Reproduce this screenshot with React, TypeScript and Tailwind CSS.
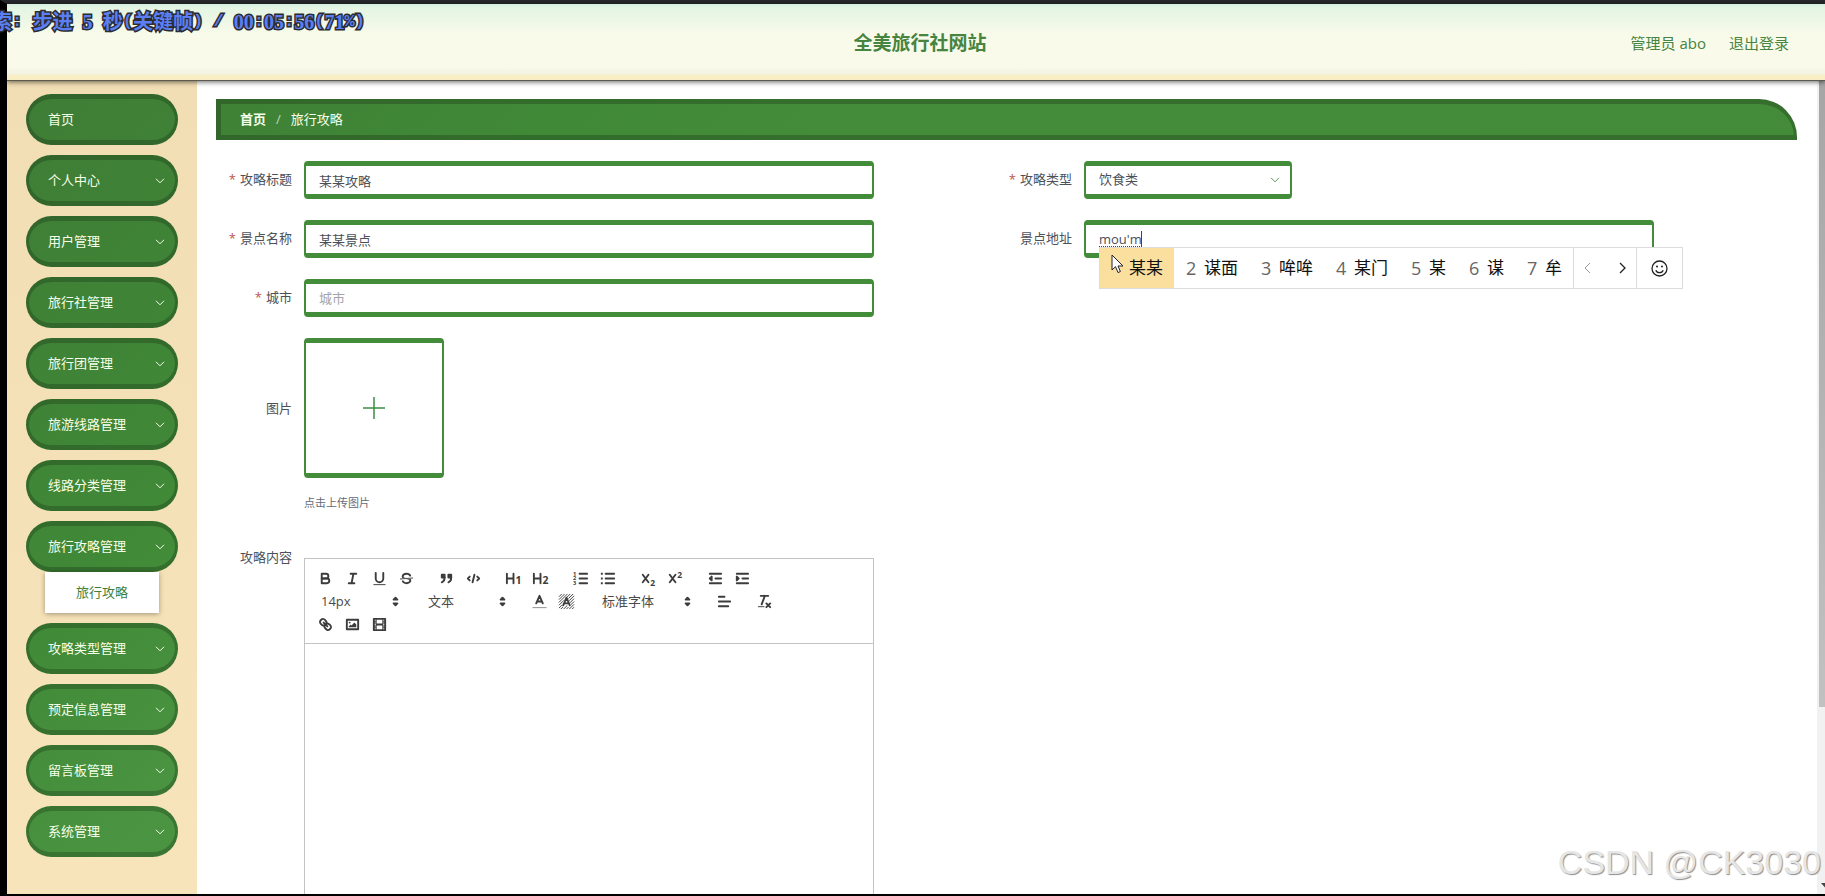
import type { ReactNode } from 'react';

const menus = [
    { name: '首页' },
    { name: '个人中心', sub: true },
    { name: '用户管理', sub: true },
    { name: '旅行社管理', sub: true },
    { name: '旅行团管理', sub: true },
    { name: '旅游线路管理', sub: true },
    { name: '线路分类管理', sub: true },
    { name: '旅行攻略管理', sub: true, open: '旅行攻略' },
    { name: '攻略类型管理', sub: true },
    { name: '预定信息管理', sub: true },
    { name: '留言板管理', sub: true },
    { name: '系统管理', sub: true },
];

const words = ['某某', '谋面', '哞哞', '某门', '某', '谋', '牟'];

const inputStyle =
    'block h-[38px] w-full rounded border-x-2 border-y-[5px] border-[#438d3a] bg-white px-[13px] text-[13px] text-[#4b4f57] outline-none placeholder:text-[#a3a5ab]';

const Arrow = ({ className }: { className?: string }) => (
    <svg className={className} width="10" height="6" viewBox="0 0 10 6" fill="none" stroke="currentColor">
        <path d="M1 .8 5 4.8 9 .8" />
    </svg>
);

const Field = ({ id, label, required, children }: { id: string; label: string; required?: boolean; children: ReactNode }) => (
    <div className="flex">
        <label htmlFor={id} className="mr-3 w-[76px] flex-none text-right text-[13px] leading-9 text-[#4d5157]">
            {required && <span className="mr-1 text-[#b9544f]">*</span>}
            {label}
        </label>
        <div className="relative w-full max-w-[570px]">{children}</div>
    </div>
);

const Icon = ({ label, children }: { label: string; children: ReactNode }) => (
    <button type="button" aria-label={label} className="flex h-[23px] w-[27px] items-center justify-center">
        <svg width="17" height="17" viewBox="0 0 18 18" fill="none" stroke="#3c3c3c" strokeWidth="2" strokeLinecap="round" strokeLinejoin="round">
            {children}
        </svg>
    </button>
);

const Digit = ({ x, y, size, children }: { x: number; y: number; size: number; children: string }) => (
    <text x={x} y={y} fontSize={size} fontWeight="700" fontFamily="Open Sans, sans-serif" fill="#3c3c3c" stroke="none">
        {children}
    </text>
);

const Picker = ({ label, value, wide }: { label: string; value: string; wide?: boolean }) => (
    <div className={wide ? 'relative w-[105px]' : 'relative w-[94px]'}>
        <select aria-label={label} className="block h-[23px] w-full appearance-none bg-transparent pl-[9px] text-[13px] text-[#4a4a4a] outline-none">
            <option>{value}</option>
        </select>
        <svg className="pointer-events-none absolute top-[3px] right-0.5" width="17" height="17" viewBox="0 0 18 18" fill="#3c3c3c" stroke="#3c3c3c" strokeWidth="2" strokeLinejoin="round">
            <path d="M7 11 9 13 11 11ZM7 7 9 5 11 7Z" />
        </svg>
    </div>
);

const Group = ({ children }: { children: ReactNode }) => <div className="flex">{children}</div>;

const Toolbar = () => (
    <div className="border-b border-[#c3c3c3] px-[7px] pt-2 pb-[7px]">
        <div className="flex gap-[13px]">
            <Group>
                <Icon label="加粗">
                    <path d="M5 4H9.5A2.5 2.5 0 0 1 9.5 9H5Z" />
                    <path d="M5 9H10.5A2.5 2.5 0 0 1 10.5 14H5Z" />
                </Icon>
                <Icon label="斜体"><path d="M7 4H13M5 14H11M8 14 10 4" /></Icon>
                <Icon label="下划线">
                    <path d="M5 3V9a4 4 0 0 0 8 0V3" />
                    <path d="M3 15.5H15" strokeWidth="1" />
                </Icon>
                <Icon label="删除线">
                    <path d="M15.5 8.5 2.5 9.5" strokeWidth="1" />
                    <path fill="#3c3c3c" stroke="none" d="M9.007,8C6.542,7.791,6,7.519,6,6.5,6,5.792,7.283,5,9,5c1.571,0,2.765.679,2.969,1.309a1,1,0,0,0,1.9-.617C13.356,4.106,11.354,3,9,3,6.2,3,4,4.538,4,6.5a3.2,3.2,0,0,0,.5,1.843Z" />
                    <path fill="#3c3c3c" stroke="none" d="M8.984,10C11.457,10.208,12,10.479,12,11.5c0,.708-1.283,1.5-3,1.5-1.571,0-2.765-.679-2.969-1.309a1,1,0,1,0-1.9.617C4.644,13.894,6.646,15,9,15c2.8,0,5-1.538,5-3.5a3.2,3.2,0,0,0-.5-1.843Z" />
                </Icon>
            </Group>
            <Group>
                <Icon label="引用">
                    <path fill="#3c3c3c" d="M4 5H7V8H4ZM11 5H14V8H11Z" />
                    <path d="M7 8c0 4-3 5-3 5M14 8c0 4-3 5-3 5" />
                </Icon>
                <Icon label="代码"><path d="M5 7 3 9 5 11M13 7 15 9 13 11M10 5 8 13" /></Icon>
            </Group>
            <Group>
                <Icon label="标题一">
                    <path d="M2 4V14M9 4V14M2 9H9" />
                    <Digit x={11} y={15} size={11}>1</Digit>
                </Icon>
                <Icon label="标题二">
                    <path d="M2 4V14M9 4V14M2 9H9" />
                    <Digit x={11} y={15} size={11}>2</Digit>
                </Icon>
            </Group>
            <Group>
                <Icon label="有序列表">
                    <path d="M8 4H16M8 9H16M8 14H16" />
                    <Digit x={1} y={6} size={6}>1</Digit>
                    <Digit x={1} y={11} size={6}>2</Digit>
                    <Digit x={1} y={16} size={6}>3</Digit>
                </Icon>
                <Icon label="无序列表">
                    <path d="M7 4H16M7 9H16M7 14H16" />
                    <path fill="#3c3c3c" stroke="none" d="M2 3H4V5H2ZM2 8H4V10H2ZM2 13H4V15H2Z" />
                </Icon>
            </Group>
            <Group>
                <Icon label="下标">
                    <path d="M4 5 10 13M10 5 4 13" />
                    <Digit x={12} y={17} size={9}>2</Digit>
                </Icon>
                <Icon label="上标">
                    <path d="M4 5 10 13M10 5 4 13" />
                    <Digit x={12} y={8} size={9}>2</Digit>
                </Icon>
            </Group>
            <Group>
                <Icon label="减少缩进">
                    <path d="M4 14H16M4 4H16M10 9H16" />
                    <path fill="#3c3c3c" d="M6 7V11L4 9Z" />
                </Icon>
                <Icon label="增加缩进">
                    <path d="M4 14H16M4 4H16M10 9H16" />
                    <path fill="#3c3c3c" d="M4 7V11L6 9Z" />
                </Icon>
            </Group>
        </div>
        <div className="flex gap-[13px]">
            <Picker label="字号" value="14px" />
            <Picker label="标题" value="文本" />
            <Group>
                <Icon label="文字颜色">
                    <path d="M5.5 11 9 3 12.5 11M11.6 9H6.4" />
                    <path d="M2 15.5H16" stroke="#8a8a8a" strokeWidth="1" />
                </Icon>
                <Icon label="背景颜色">
                    <path strokeWidth="1" strokeLinecap="butt" d="M1 4 4 1M1 7 7 1M1 10 10 1M1 13 13 1M1 16 16 1M3 17 17 3M6 17 17 6M9 17 17 9M12 17 17 12M15 17 17 15" />
                    <path stroke="#fff" strokeWidth="4" d="M6 13 9 6 12 13" />
                    <path d="M5.5 13 9 5 12.5 13M11.6 11H6.4" />
                </Icon>
            </Group>
            <Picker label="字体" value="标准字体" wide />
            <Icon label="对齐"><path d="M3 9H15M3 14H13M3 4H9" /></Icon>
            <Icon label="清除格式">
                <path d="M5 3H13M6 12 9.35 3M11 11 15 15M15 11 11 15" />
                <path d="M2.5 14.5H8.5" strokeWidth="1" />
            </Icon>
        </div>
        <div className="flex">
            <Icon label="链接">
                <path d="M7 7 11 11" />
                <path d="M8.9,4.577a3.476,3.476,0,0,1,.36,4.679A3.476,3.476,0,0,1,4.577,8.9C3.185,7.5,2.035,6.4,4.217,4.217S7.5,3.185,8.9,4.577Z" />
                <path d="M13.423,9.1a3.476,3.476,0,0,0-4.679-.36,3.476,3.476,0,0,0,.36,4.679c1.392,1.392,2.5,2.542,4.679.36S14.815,10.5,13.423,9.1Z" />
            </Icon>
            <Icon label="图片">
                <path d="M3 4H15V14H3Z" />
                <circle cx="6" cy="7" r="1" fill="#3c3c3c" stroke="none" />
                <path fill="#3c3c3c" stroke="none" d="M5 12V11L7 9 8 10 11 7 13 9V12Z" />
            </Icon>
            <Icon label="视频">
                <path d="M3 3H15V15H3Z" />
                <path fill="#3c3c3c" stroke="none" d="M5 3H6V15H5ZM12 3H13V15H12ZM5 8H13V10H5ZM3 5H6V6H3ZM3 7H6V8H3ZM3 10H6V11H3ZM3 12H6V13H3ZM12 5H15V6H12ZM12 7H15V8H12ZM12 10H15V11H12ZM12 12H15V13H12Z" />
            </Icon>
        </div>
    </div>
);

const Header = () => (
    <header className="relative z-10 grid h-[77px] flex-none grid-cols-[1fr_auto_1fr] items-center border-b border-[#5d5a50] bg-[linear-gradient(180deg,#d3f0df_0px,#e4f5e4_3px,#eaf6e4_12px,#f8faea_30px,#fafae9_62px,#f3f3e4_70px,#f9efc6_71px,#f7ecc2_76px)] pt-0.5 pr-9 pl-11 text-[#46843f] shadow-[0_1px_5px_rgba(0,0,0,0.6)]">
        <div />
        <h1 className="text-[19px] font-bold">全美旅行社网站</h1>
        <div className="flex justify-end gap-[23px] text-[15px]">
            <span>管理员 abo</span>
            <a href="#logout">退出登录</a>
        </div>
    </header>
);

const Sidebar = () => (
    <aside className="w-[190px] flex-none bg-linear-to-b from-[#f2deb4] to-[#f8e4ba] px-[19px] pt-[13px]">
        <nav>
            {menus.map((item) => (
                <div key={item.name} className="mb-2.5">
                    <button
                        type="button"
                        className="flex h-[51px] w-full items-center justify-between rounded-[26px] border-x-[3px] border-y-[5px] border-black/20 bg-[linear-gradient(135deg,#3e7a35_0%,#408937_24%,#4b9442_36%,#418c38_50%,#479040_100%)] bg-fixed pr-2.5 pl-[19px] text-[13px] text-[#f6ffe9]"
                    >
                        {item.name}
                        {item.sub && <Arrow />}
                    </button>
                    {item.open && (
                        <a href="#guide" className="mx-[19px] block h-[41px] bg-white text-center text-[13px] leading-[41px] text-[#3f8038] shadow-[0_1px_5px_rgba(0,0,0,0.35)]">
                            {item.open}
                        </a>
                    )}
                </div>
            ))}
        </nav>
    </aside>
);

const Candidates = () => (
    <div className="absolute top-[27px] left-[15px] z-20 flex h-[42px] border border-[#dcdcdc] bg-white text-[17px] whitespace-nowrap text-[#111]">
        {words.map((word, i) => (
            <div key={word} className={i === 0 ? 'flex items-center bg-[#fadf9f] px-[11px]' : 'flex items-center pr-[11px] pl-3'}>
                <span className="w-[18px] text-[18px] text-[#666]">
                    {i === 0 ? (
                        <svg className="mb-2" width="13" height="20" viewBox="0 0 13 20" fill="#fff" stroke="#222">
                            <path d="M1 1V16L4.5 12.7 7 18.6 9.4 17.5 7 12H12Z" />
                        </svg>
                    ) : (
                        i + 1
                    )}
                </span>
                {word}
            </div>
        ))}
        <div className="flex border-l border-[#dcdcdc]">
            <button type="button" aria-label="上一页" className="flex w-[31px] items-center justify-center pr-1 text-[#999]">
                <svg width="7" height="12" viewBox="0 0 7 12" fill="none" stroke="currentColor"><path d="M6 1 1 6 6 11" /></svg>
            </button>
            <button type="button" aria-label="下一页" className="flex w-[31px] items-center justify-center pl-1 text-[#222]">
                <svg width="7" height="12" viewBox="0 0 7 12" fill="none" stroke="currentColor" strokeWidth="1.3"><path d="M1 1 6 6 1 11" /></svg>
            </button>
        </div>
        <button type="button" aria-label="表情" className="flex w-[46px] items-center justify-center border-l border-[#dcdcdc]">
            <svg width="17" height="17" viewBox="0 0 17 17" fill="none" stroke="#222" strokeWidth="1.3">
                <circle cx="8.5" cy="8.5" r="7.5" />
                <path d="M4.8 10.2a4 4 0 0 0 7.4 0" />
                <circle cx="6" cy="6.5" r="1" fill="#222" stroke="none" />
                <circle cx="11" cy="6.5" r="1" fill="#222" stroke="none" />
            </svg>
        </button>
    </div>
);

const GuideForm = () => (
    <form className="flex min-h-0 flex-1 flex-col">
        <div className="mt-[21px] grid grid-cols-2 gap-y-[21px] pr-[21px]">
            <Field id="title" label="攻略标题" required>
                <input id="title" className={inputStyle} defaultValue="某某攻略" />
            </Field>
            <Field id="type" label="攻略类型" required>
                <div className="relative w-[208px]">
                    <select id="type" className={`${inputStyle} appearance-none`}>
                        <option>饮食类</option>
                    </select>
                    <Arrow className="pointer-events-none absolute top-4 right-3 text-[#5b9a60]" />
                </div>
            </Field>
            <Field id="spot" label="景点名称" required>
                <input id="spot" className={inputStyle} defaultValue="某某景点" />
            </Field>
            <Field id="address" label="景点地址">
                <input id="address" className={inputStyle} defaultValue="mou'm" />
                <div className="pointer-events-none absolute top-[11px] left-[15px] h-4 w-[43px] border-r border-b border-[#444] [border-bottom-style:dotted]" />
                <Candidates />
            </Field>
            <Field id="city" label="城市" required>
                <input id="city" className={inputStyle} placeholder="城市" />
            </Field>
        </div>
        <div className="mt-[21px] flex">
            <label htmlFor="picture" className="mr-3 w-[76px] flex-none text-right text-[13px] leading-[140px] text-[#4d5157]">图片</label>
            <div>
                <button id="picture" type="button" className="flex h-[140px] w-[140px] items-center justify-center rounded border-x-2 border-y-[5px] border-[#438d3a]">
                    <svg width="22" height="22" viewBox="0 0 22 22" stroke="#3f8d45" strokeWidth="1.5"><path d="M0 11H22M11 0V22" /></svg>
                </button>
                <p className="mt-[17px] text-[11px] leading-4 text-[#5f6b7b]">点击上传图片</p>
            </div>
        </div>
        <div className="mt-[47px] flex min-h-0 flex-1">
            <label htmlFor="content" className="-mt-2.5 mr-3 w-[76px] flex-none text-right text-[13px] leading-[18px] text-[#4d5157]">攻略内容</label>
            <div className="flex w-full max-w-[570px] flex-col border-x border-t border-[#c3c3c3]">
                <Toolbar />
                <textarea id="content" className="w-full flex-1 resize-none px-4 py-3 text-[13px] outline-none" />
            </div>
        </div>
    </form>
);

// punctuation is set in mono and digits in serif so that both are half an em wide
const Half = ({ children }: { children: string }) => (
    <span className="font-['Liberation_Mono',monospace] text-[17px]">{children}</span>
);

const Osd = () => (
    <div className="pointer-events-none absolute top-0.5 -left-2 z-20 flex h-10 items-center font-['Liberation_Serif','Noto_Sans_CJK_SC',serif] text-[20px] font-bold whitespace-pre text-[#5b7ff2] [-webkit-text-stroke:3px_#2b2c31] [paint-order:stroke_fill]">
        <span>索</span>
        <Half>: </Half>
        <span>步进</span>
        <Half> </Half>
        <span>5</span>
        <Half> </Half>
        <span>秒</span>
        <Half>(</Half>
        <span>关键帧</span>
        <Half>) / </Half>
        <span>00</span>
        <Half>:</Half>
        <span>05</span>
        <Half>:</Half>
        <span>56</span>
        <Half>(</Half>
        <span>71</span>
        <Half>%)</Half>
    </div>
);

const App = () => {
    return (
        <div className="relative h-screen overflow-hidden">
            <div className="flex h-full flex-col border-t-4 border-b-2 border-l-[7px] border-t-[#27282c] border-b-black border-l-black bg-white font-['Open_Sans','Noto_Sans_CJK_SC',sans-serif]">
                <Header />
                <div className="flex min-h-0 flex-1">
                    <Sidebar />
                    <main className="flex min-w-0 flex-1 flex-col pt-[18px] pr-5 pl-[19px]">
                        <div className="flex h-[41px] flex-none items-center rounded-tr-[38px] border-y-[5px] border-r-[3px] border-l-[5px] border-black/20 bg-[linear-gradient(135deg,#3e7a35_0%,#408937_24%,#448c39_36%,#438b39_100%)] bg-fixed pl-[19px] text-[13px] text-[#f6ffe9]">
                            <a href="#home" className="font-bold">首页</a>
                            <span className="mx-2.5 text-[#c5d3c0]">/</span>
                            <span>旅行攻略</span>
                        </div>
                        <GuideForm />
                    </main>
                    <div className="flex w-2 flex-none flex-col justify-between overflow-hidden bg-[#f1f1f1] pl-0.5">
                        <div className="h-[77%] bg-linear-to-b from-[#a6a6a6] to-[#c1c1c1]" />
                        <svg className="mb-1.5 ml-0.5" width="9" height="5" viewBox="0 0 9 5" fill="#444"><path d="M0 0H9L4.5 5Z" /></svg>
                    </div>
                </div>
            </div>
            <Osd />
            <div className="pointer-events-none absolute right-1 bottom-3.5 z-20 font-['Liberation_Sans',sans-serif] text-[34px] leading-10 text-[#e6e6e6] [text-shadow:1px_1px_1px_#8d8d8d]">
                CSDN @CK3030
            </div>
        </div>
    );
};

export default App;
